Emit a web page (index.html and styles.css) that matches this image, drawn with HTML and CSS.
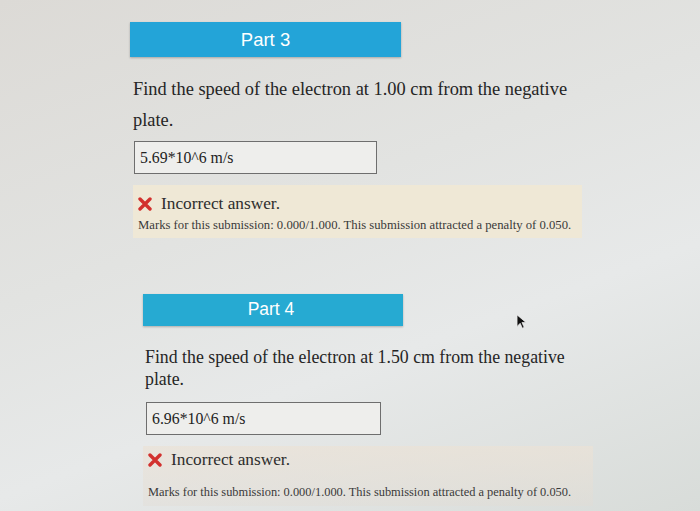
FILE: index.html
```html
<!DOCTYPE html>
<html>
<head>
<meta charset="utf-8">
<link rel="stylesheet" href="styles.css">
</head>
<body>
<div class="screen">
  <section class="part part-a">
    <div class="bar">Part 3</div>
    <p class="question">Find the speed of the electron at 1.00 cm from the negative plate.</p>
    <div class="answer">5.69*10^6 m/s</div>
    <div class="feedback">
      <div class="verdict"><svg class="xicon" viewBox="0 0 14 14"><path d="M2 2 L12 12 M12 2 L2 12" stroke="#d2312e" stroke-width="3.4" stroke-linecap="round"/></svg>Incorrect answer.</div>
      <div class="marks">Marks for this submission: 0.000/1.000. This submission attracted a penalty of 0.050.</div>
    </div>
  </section>
  <section class="part part-b">
    <div class="bar">Part 4</div>
    <p class="question">Find the speed of the electron at 1.50 cm from the negative plate.</p>
    <div class="answer">6.96*10^6 m/s</div>
    <div class="feedback">
      <div class="verdict"><svg class="xicon" viewBox="0 0 14 14"><path d="M2 2 L12 12 M12 2 L2 12" stroke="#d2312e" stroke-width="3.4" stroke-linecap="round"/></svg>Incorrect answer.</div>
      <div class="marks">Marks for this submission: 0.000/1.000. This submission attracted a penalty of 0.050.</div>
    </div>
  </section>
  <svg class="cursor" viewBox="0 0 12 18"><path d="M1 1 L1 14 L4.5 10.5 L7 16 L9 15 L6.5 9.5 L11 9.5 Z" fill="#111" stroke="#eee" stroke-width="0.8"/></svg>
</div>
</body>
</html>
```
FILE: styles.css
```css
html, body {
  margin: 0;
  padding: 0;
}
body {
  width: 700px;
  height: 511px;
  overflow: hidden;
  font-family: "Liberation Serif", "Times New Roman", serif;
  color: #2a2a2a;
}
.screen {
  position: relative;
  width: 700px;
  height: 511px;
  padding-top: 22px;
  box-sizing: border-box;
  background: linear-gradient(160deg, #dcdad6 0%, #e2e3e1 40%, #e7e9e9 65%, #d8dcd9 100%);
}
.part {
  display: flex;
  flex-direction: column;
  align-items: flex-start;
}
.bar {
  background: #23a4d8;
  color: #fff;
  font-family: "Liberation Sans", Arial, sans-serif;
  text-align: center;
  box-shadow: 0 1px 2px rgba(0,0,0,0.25);
}
.question {
  margin: 0;
  color: #252525;
}
.answer {
  box-sizing: border-box;
  border: 1px solid #6e6e6e;
  background: #eeeeec;
  color: #222;
  display: flex;
  align-items: center;
  padding-left: 5px;
}
.feedback {
  box-sizing: border-box;
  display: flex;
  flex-direction: column;
}
.verdict {
  display: flex;
  align-items: center;
  color: #2e2e2e;
}
.xicon {
  width: 14px;
  height: 14px;
  margin-right: 9px;
}
.marks {
  color: #3a3a3a;
  white-space: nowrap;
}

/* Part 3 */
.part-a {
  margin-left: 130px;
  width: 470px;
}
.part-a .bar {
  width: 271px;
  height: 35px;
  line-height: 35px;
  font-size: 18.5px;
}
.part-a .question {
  margin-top: 17px;
  width: 448px;
  margin-left: 3px;
  font-size: 18.4px;
  line-height: 31px;
}
.part-a .answer {
  margin-top: 5px;
  margin-left: 4px;
  width: 243px;
  height: 33px;
  font-size: 15.8px;
}
.part-a .feedback {
  margin-top: 11px;
  margin-left: 3px;
  width: 449px;
  height: 53px;
  background: #efe8d6;
  padding: 10px 0 0 5px;
}
.part-a .verdict {
  font-size: 17.3px;
  height: 18px;
}
.part-a .marks {
  margin-top: 5px;
  font-size: 12.7px;
}

/* Part 4 */
.part-b {
  margin-left: 143px;
  width: 470px;
  margin-top: 56px;
}
.part-b .bar {
  width: 260px;
  height: 32px;
  line-height: 30px;
  font-size: 17.5px;
  background: #26aad2;
  text-indent: -4px;
}
.part-b .question {
  margin-top: 20px;
  margin-left: 2px;
  width: 445px;
  font-size: 17.8px;
  line-height: 22px;
}
.part-b .answer {
  margin-top: 12px;
  margin-left: 3px;
  width: 235px;
  height: 33px;
  font-size: 15.8px;
}
.part-b .feedback {
  margin-top: 11px;
  width: 450px;
  height: 60px;
  background: linear-gradient(180deg, rgba(235,226,214,0.7), rgba(226,220,212,0.4));
  padding: 5px 0 0 5px;
}
.part-b .verdict {
  font-size: 17.3px;
  height: 18px;
}
.part-b .marks {
  margin-top: 16px;
  font-size: 12.4px;
}

.cursor {
  position: absolute;
  left: 516px;
  top: 314px;
  width: 11px;
  height: 16px;
}
```
